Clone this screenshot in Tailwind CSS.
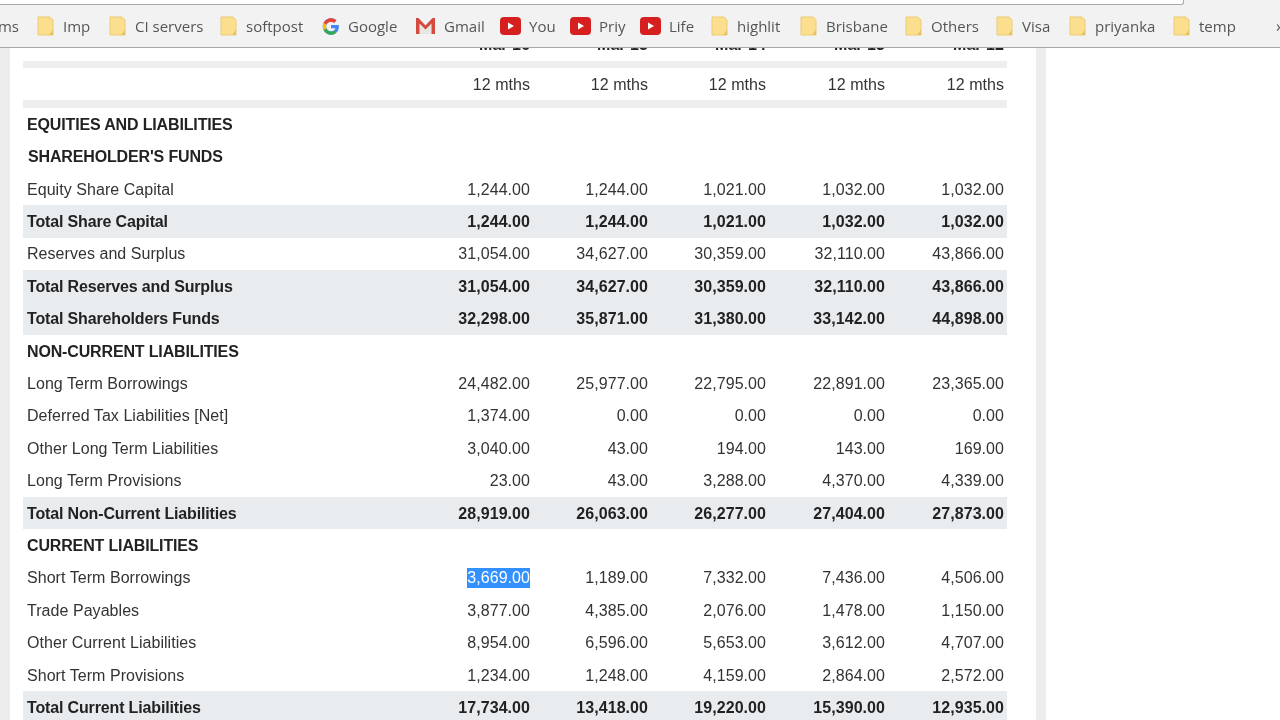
<!DOCTYPE html>
<html><head><script src="https://cdn.jsdelivr.net/npm/@tailwindcss/browser@4"></script></head>
<body class="w-[1280px] h-[720px] overflow-hidden bg-white font-['Liberation_Sans',sans-serif] text-[#333] blur-[0.35px]">
<svg class="hidden"><defs>
<symbol id="folder" viewBox="0 0 17 20"><path d="M1 1h12l3 3v15H1z" fill="#fcdf8e" stroke="#eccb72" stroke-width="1"/><path d="M16 14l-4 5h4z" fill="#e6c062"/></symbol>
<symbol id="yt" viewBox="0 0 21 18"><rect width="21" height="18" rx="4" fill="#d6201f"/><path d="M8 5.500l6 3.500-6 3.500z" fill="#fff"/></symbol>
</defs></svg>
<div class="relative z-10 h-[48px] bg-[#f2f2f2] border-b border-[#a8a8a8] flex items-center pt-[5px] text-[15px] text-[#555] whitespace-nowrap overflow-hidden font-['Open_Sans',sans-serif]">
<div class="absolute top-0 left-0 w-[1184px] h-[5px] border-b border-r border-[#aaa] bg-white rounded-br-[3px]"></div>
<div class="w-[37px] pr-[18px] flex justify-end">ms</div>
<div class="w-[72px] flex items-center"><svg class="w-[17px] h-[20px] mr-[9px]"><use href="#folder"/></svg>Imp</div>
<div class="w-[111px] flex items-center"><svg class="w-[17px] h-[20px] mr-[9px]"><use href="#folder"/></svg>CI servers</div>
<div class="w-[102px] flex items-center"><svg class="w-[17px] h-[20px] mr-[9px]"><use href="#folder"/></svg>softpost</div>
<div class="w-[93px] flex items-center"><svg class="w-[18px] h-[19px] mr-[8px]" viewBox="0 0 48 48"><path d="M44.500 20H24v8.500h11.800C34.700 33.700 29.700 37 24 37c-7.200 0-13-5.800-13-13s5.800-13 13-13c3.100 0 6 1.100 8.200 3l6.400-6.100C34.700 4.300 29.700 2 24 2 11.800 2 2 11.800 2 24s9.800 22 22 22c11 0 21-8 21-22 0-1.300-.2-2.700-.5-4z" fill="#4285f4"/><path d="M4.500 13.700l7 5.100C13.400 14.200 18.300 11 24 11c3.100 0 6 1.100 8.200 3l6.400-6.100C34.700 4.300 29.700 2 24 2 15.500 2 8.200 6.800 4.500 13.700z" fill="#ea4335"/><path d="M24 46c5.400 0 10.300-2.100 14-5.400l-6.500-5.500C29.500 36.300 26.900 37 24 37c-5.700 0-10.500-3.300-12.300-8.500l-7 5.400C8.300 41.100 15.600 46 24 46z" fill="#34a853"/><path d="M4.500 13.700C3 16.700 2 20.200 2 24s1 7.100 2.700 9.900l7-5.400C11.200 27.100 11 25.600 11 24s.2-3.600.5-5.200z" fill="#fbbc05"/></svg>Google</div>
<div class="w-[85px] flex items-center"><svg class="w-[21px] h-[18px] mr-[8px]" viewBox="0 0 21 18"><path d="M4.500 6.500l6 6 6-6V17h-12z" fill="#e8e6e3"/><path d="M1 17V1h2.500l7 7.500 7-7.500H20v16h-3.500V6.500l-6 6-6-6V17z" fill="#d44a3e"/></svg>Gmail</div>
<div class="w-[70px] flex items-center"><svg class="w-[21px] h-[18px] mr-[8px]"><use href="#yt"/></svg>You</div>
<div class="w-[70px] flex items-center"><svg class="w-[21px] h-[18px] mr-[8px]"><use href="#yt"/></svg>Priy</div>
<div class="w-[71px] flex items-center"><svg class="w-[21px] h-[18px] mr-[8px]"><use href="#yt"/></svg>Life</div>
<div class="w-[89px] flex items-center"><svg class="w-[17px] h-[20px] mr-[9px]"><use href="#folder"/></svg>highlit</div>
<div class="w-[105px] flex items-center"><svg class="w-[17px] h-[20px] mr-[9px]"><use href="#folder"/></svg>Brisbane</div>
<div class="w-[91px] flex items-center"><svg class="w-[17px] h-[20px] mr-[9px]"><use href="#folder"/></svg>Others</div>
<div class="w-[73px] flex items-center"><svg class="w-[17px] h-[20px] mr-[9px]"><use href="#folder"/></svg>Visa</div>
<div class="w-[104px] flex items-center"><svg class="w-[17px] h-[20px] mr-[9px]"><use href="#folder"/></svg>priyanka</div>
<div class="w-[100px] flex items-center"><svg class="w-[17px] h-[20px] mr-[9px]"><use href="#folder"/></svg>temp</div>
<div class="absolute right-0 top-[16px] text-[16px] leading-[20px] w-[4px] overflow-hidden">»</div>
</div>
<div class="relative -mt-[20px] h-[692px] text-[16px] tracking-[0.05px]">
<div class="absolute left-0 top-0 w-[10px] h-full bg-[#ededed]"></div>
<div class="absolute left-[1036px] top-0 w-[10px] h-full bg-[#ededed]"></div>
<div class="relative ml-[23px] w-[984px] [&>div]:grid [&>div]:grid-cols-[389px_118px_118px_118px_119px_119px] [&>div]:items-center [&>div]:h-[32.42px] [&>div]:pt-[1px] [&>div>span:not(:first-child)]:text-right [&>div>span:first-child]:pl-[4px] [&>div.font-bold>span:first-child]:tracking-[-0.15px] [&>div.font-bold]:text-[#222]">
<div class="font-bold !h-[33px] !pt-0"><span></span><span>Mar 16</span><span>Mar 15</span><span>Mar 14</span><span>Mar 13</span><span>Mar 12</span></div>
<div class="!h-[7px] !pt-0 bg-[#eeeeee] !block"></div>
<div class="!h-[32px] !pt-[2px]"><span></span><span>12 mths</span><span>12 mths</span><span>12 mths</span><span>12 mths</span><span>12 mths</span></div>
<div class="!h-[8px] !pt-0 bg-[#eeeeee] !block"></div>
<div class="font-bold"><span>EQUITIES AND LIABILITIES</span></div>
<div class="font-bold"><span class="!pl-[5px]">SHAREHOLDER'S FUNDS</span></div>
<div><span>Equity Share Capital</span><span>1,244.00</span><span>1,244.00</span><span>1,021.00</span><span>1,032.00</span><span>1,032.00</span></div>
<div class="font-bold bg-[#e9ecef]"><span>Total Share Capital</span><span>1,244.00</span><span>1,244.00</span><span>1,021.00</span><span>1,032.00</span><span>1,032.00</span></div>
<div><span>Reserves and Surplus</span><span>31,054.00</span><span>34,627.00</span><span>30,359.00</span><span>32,110.00</span><span>43,866.00</span></div>
<div class="font-bold bg-[#e9ecef]"><span>Total Reserves and Surplus</span><span>31,054.00</span><span>34,627.00</span><span>30,359.00</span><span>32,110.00</span><span>43,866.00</span></div>
<div class="font-bold bg-[#e9ecef]"><span>Total Shareholders Funds</span><span>32,298.00</span><span>35,871.00</span><span>31,380.00</span><span>33,142.00</span><span>44,898.00</span></div>
<div class="font-bold"><span>NON-CURRENT LIABILITIES</span></div>
<div><span>Long Term Borrowings</span><span>24,482.00</span><span>25,977.00</span><span>22,795.00</span><span>22,891.00</span><span>23,365.00</span></div>
<div><span>Deferred Tax Liabilities [Net]</span><span>1,374.00</span><span>0.00</span><span>0.00</span><span>0.00</span><span>0.00</span></div>
<div><span>Other Long Term Liabilities</span><span>3,040.00</span><span>43.00</span><span>194.00</span><span>143.00</span><span>169.00</span></div>
<div><span>Long Term Provisions</span><span>23.00</span><span>43.00</span><span>3,288.00</span><span>4,370.00</span><span>4,339.00</span></div>
<div class="font-bold bg-[#e9ecef]"><span>Total Non-Current Liabilities</span><span>28,919.00</span><span>26,063.00</span><span>26,277.00</span><span>27,404.00</span><span>27,873.00</span></div>
<div class="font-bold"><span>CURRENT LIABILITIES</span></div>
<div><span>Short Term Borrowings</span><span><span class="inline-block bg-[#3390ff] text-white leading-[20px]">3,669.00</span></span><span>1,189.00</span><span>7,332.00</span><span>7,436.00</span><span>4,506.00</span></div>
<div><span>Trade Payables</span><span>3,877.00</span><span>4,385.00</span><span>2,076.00</span><span>1,478.00</span><span>1,150.00</span></div>
<div><span>Other Current Liabilities</span><span>8,954.00</span><span>6,596.00</span><span>5,653.00</span><span>3,612.00</span><span>4,707.00</span></div>
<div><span>Short Term Provisions</span><span>1,234.00</span><span>1,248.00</span><span>4,159.00</span><span>2,864.00</span><span>2,572.00</span></div>
<div class="font-bold bg-[#e9ecef]"><span>Total Current Liabilities</span><span>17,734.00</span><span>13,418.00</span><span>19,220.00</span><span>15,390.00</span><span>12,935.00</span></div>
</div>
</div>
</body></html>
